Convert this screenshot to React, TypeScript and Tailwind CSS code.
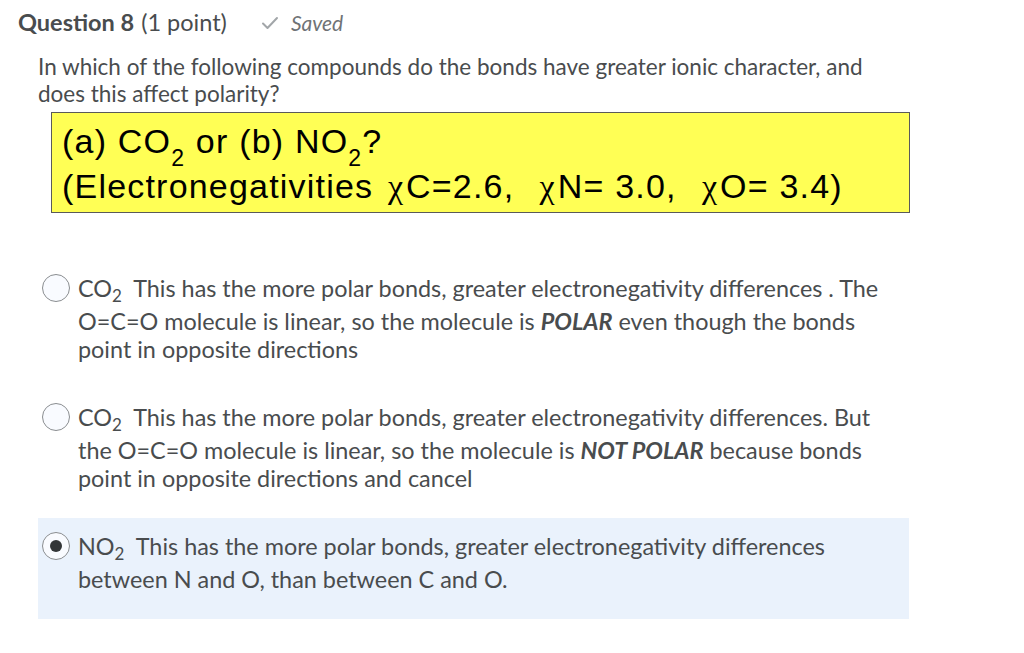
import React from "react";

const lato = { fontFamily: "Lato, 'Open Sans', sans-serif" };

function Radio({ checked }: { checked?: boolean }) {
  return (
    <div className="shrink-0 w-[28px] h-[28px] rounded-full border border-[#8a8d90] bg-[#f9fbff] flex items-center justify-center mt-[0px]">
      {checked && <div className="w-[12px] h-[12px] rounded-full bg-[#333638]" />}
    </div>
  );
}

function Chi() {
  return (
    <span className="font-['Liberation_Serif',serif] tracking-normal ml-[4px] mr-[3px]">χ</span>
  );
}

function Sub({ children }: { children: React.ReactNode }) {
  return <span className="text-[17px] align-[-5px] leading-[22px]">{children}</span>;
}

function Option({
  checked,
  children,
}: {
  checked?: boolean;
  children: React.ReactNode;
}) {
  return (
    <div
      className={`flex items-start gap-[8px] pl-[4px] pt-[14px] pb-[26px] ${
        checked ? "bg-[#eaf2fc]" : ""
      }`}
    >
      <Radio checked={checked} />
      <div className="text-[23.4px] leading-[28px] text-[#494c4e] w-[830px]">{children}</div>
    </div>
  );
}

export default function App() {
  return (
    <div className="w-[1024px] h-[653px] bg-white text-[#494c4e]" style={lato}>
      <div className="pl-[18px] pt-[5px] flex items-baseline">
        <span className="text-[23.5px] font-bold">Question 8</span>
        <span className="text-[23.5px] ml-[7px]">(1 point)</span>
        <svg
          className="ml-[34px] self-center mt-[1px]"
          width="18"
          height="14"
          viewBox="0 0 18 14"
          fill="none"
        >
          <path d="M2 7.5 L6.5 12 L16 2" stroke="#a2a6a9" strokeWidth="2" strokeLinecap="round" strokeLinejoin="round" />
        </svg>
        <span className="ml-[12px] text-[21px] italic text-[#6f7376]">Saved</span>
      </div>

      <div className="ml-[38px] w-[872px]">
        <div className="mt-[13px] text-[22.5px] leading-[27px]">
          In which of the following compounds do the bonds have greater ionic character, and does
          this affect polarity?
        </div>
        <div
          className="ml-[13px] mt-[5px] w-[859px] h-[101px] bg-[#ffff55] border border-[#5a5a5a] pl-[10px] pt-[6px] text-[34px] leading-[44px] tracking-[1.2px] text-black"
          style={{ fontFamily: "'Liberation Sans', Arial, sans-serif" }}
        >
          <div>
            (a) CO<sub className="text-[23px] leading-none align-[-7px]">2</sub> or (b) NO
            <sub className="text-[23px] leading-none align-[-7px]">2</sub>?
          </div>
          <div>
            {"(Electronegativities "}
            <Chi />
            {"C=2.6,\u00a0 "}
            <Chi />
            {"N= 3.0,\u00a0 "}
            <Chi />
            {"O= 3.4)"}
          </div>
        </div>

        <div className="mt-[47px] w-[871px]">
          <Option>
            CO<Sub>2</Sub>&nbsp; This has the more polar bonds, greater electronegativity
            differences . The O=C=O molecule is linear, so the molecule is{" "}
            <b>
              <i>POLAR</i>
            </b>{" "}
            even though the bonds point in opposite directions
          </Option>
          <Option>
            CO<Sub>2</Sub>&nbsp; This has the more polar bonds, greater electronegativity
            differences. But the O=C=O molecule is linear, so the molecule is{" "}
            <b>
              <i>NOT POLAR</i>
            </b>{" "}
            because bonds point in opposite directions and cancel
          </Option>
          <Option checked>
            NO<Sub>2</Sub>&nbsp; This has the more polar bonds, greater electronegativity differences
            between N and O, than between C and O.
          </Option>
        </div>
      </div>
    </div>
  );
}
